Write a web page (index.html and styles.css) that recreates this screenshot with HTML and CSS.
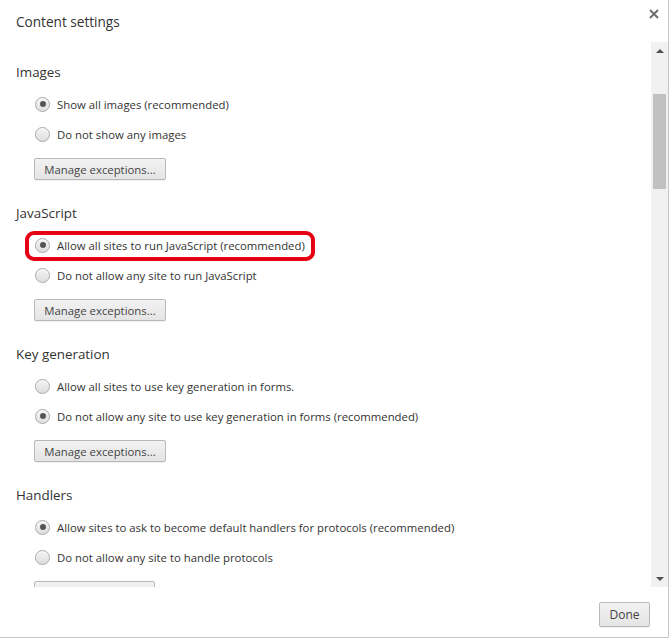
FILE: index.html
```html
<!DOCTYPE html>
<html>
<head>
<meta charset="utf-8">
<link rel="stylesheet" href="styles.css">
</head>
<body>
<div class="dialog">
  <div class="header">
    <div class="title">Content settings</div>
    <button class="close" aria-label="Close">
      <svg width="10" height="10" viewBox="0 0 10 10"><path d="M1 1L9 9M9 1L1 9" stroke="#6e6e6e" stroke-width="2"/></svg>
    </button>
  </div>
  <div class="scroll">
    <div class="content">
      <section class="group">
        <h3 class="heading">Images</h3>
        <label class="row"><span class="radio checked"></span><span>Show all images (recommended)</span></label>
        <label class="row"><span class="radio"></span><span>Do not show any images</span></label>
        <button class="btn">Manage exceptions...</button>
      </section>
      <section class="group">
        <h3 class="heading">JavaScript</h3>
        <label class="row highlight"><span class="radio checked"></span><span>Allow all sites to run JavaScript (recommended)</span></label>
        <label class="row"><span class="radio"></span><span>Do not allow any site to run JavaScript</span></label>
        <button class="btn">Manage exceptions...</button>
      </section>
      <section class="group">
        <h3 class="heading">Key generation</h3>
        <label class="row"><span class="radio"></span><span>Allow all sites to use key generation in forms.</span></label>
        <label class="row"><span class="radio checked"></span><span>Do not allow any site to use key generation in forms (recommended)</span></label>
        <button class="btn">Manage exceptions...</button>
      </section>
      <section class="group">
        <h3 class="heading">Handlers</h3>
        <label class="row"><span class="radio checked"></span><span>Allow sites to ask to become default handlers for protocols (recommended)</span></label>
        <label class="row"><span class="radio"></span><span>Do not allow any site to handle protocols</span></label>
        <button class="btn wide" aria-label="Manage handlers"></button>
      </section>
    </div>
    <div class="scrollbar">
      <div class="arrow up"></div>
      <div class="track"><div class="thumb"></div></div>
      <div class="arrow down"></div>
    </div>
  </div>
  <div class="footer">
    <button class="btn done">Done</button>
  </div>
</div>
</body>
</html>
```
FILE: styles.css
```css
html, body {
  margin: 0;
  padding: 0;
  background: #ffffff;
}
body {
  font-family: "Open Sans", "Noto Sans", sans-serif;
  color: #333333;
}
.dialog {
  width: 668px;
  height: 637px;
  background: #ffffff;
  border-right: 1px solid #c6c6c6;
  border-bottom: 1px solid #c6c6c6;
  display: flex;
  flex-direction: column;
  overflow: hidden;
}
.header {
  height: 42px;
  display: flex;
  justify-content: space-between;
  align-items: flex-start;
  flex-shrink: 0;
}
.title {
  padding: 12px 0 0 16px;
  font-size: 13.6px;
  line-height: 20px;
  color: #333;
}
.close {
  border: 0;
  background: transparent;
  padding: 0;
  margin: 9px 9px 0 0;
  width: 10px;
  height: 10px;
  display: block;
}
.close svg { display: block; }
.scroll {
  height: 545px;
  display: flex;
  flex-shrink: 0;
  overflow: hidden;
}
.content {
  flex: 1;
  padding: 20px 0 0 16px;
  overflow: hidden;
}
.group {
  display: flex;
  flex-direction: column;
  align-items: flex-start;
  padding-bottom: 23px;
}
.heading {
  margin: 0 0 7px 0;
  font-size: 13.4px;
  line-height: 20px;
  font-weight: normal;
  color: #333;
}
.row {
  height: 30px;
  display: inline-flex;
  align-items: center;
  gap: 7px;
  padding-left: 19px;
  font-size: 11.35px;
  color: #333;
  position: relative;
  white-space: nowrap;
}
.radio {
  width: 13px;
  height: 13px;
  border-radius: 50%;
  border: 1px solid #a9a9a9;
  background: linear-gradient(#f4f4f4, #dedede);
  box-sizing: content-box;
  display: flex;
  align-items: center;
  justify-content: center;
  box-shadow: inset 0 1px 1px rgba(255,255,255,0.8);
}
.radio.checked::after {
  content: "";
  width: 6px;
  height: 6px;
  border-radius: 50%;
  background: #555;
}
.highlight::after {
  content: "";
  position: absolute;
  left: 9px;
  right: -10px;
  top: 1px;
  bottom: -1px;
  border: 4px solid #e50014;
  border-radius: 9px;
}
.btn {
  font-family: "Open Sans", "Noto Sans", sans-serif;
  font-size: 11.35px;
  color: #444;
  height: 22px;
  padding: 0;
  white-space: nowrap;
  border: 1px solid #b8b8b8;
  border-radius: 2px;
  background: linear-gradient(#f2f2f2, #e4e4e4);
  box-shadow: 0 1px 0 rgba(0,0,0,0.06);
  margin: 9px 0 0 18px;
  width: 132px;
}
.btn.wide { width: 121px; }
.scrollbar {
  width: 17px;
  background: #f1f1f1;
  display: flex;
  flex-direction: column;
  align-items: center;
}
.arrow {
  height: 17px;
  width: 17px;
  display: flex;
  align-items: center;
  justify-content: center;
  flex-shrink: 0;
}
.arrow.up::after {
  content: "";
  border-left: 4px solid transparent;
  border-right: 4px solid transparent;
  border-bottom: 4px solid #505050;
}
.arrow.down::after {
  content: "";
  border-left: 4px solid transparent;
  border-right: 4px solid transparent;
  border-top: 4px solid #505050;
}
.track {
  flex: 1;
  width: 100%;
  padding-top: 35px;
  box-sizing: border-box;
}
.thumb {
  width: 13px;
  margin-left: 2px;
  height: 95px;
  background: #c1c1c1;
}
.footer {
  flex: 1;
  display: flex;
  justify-content: flex-end;
  align-items: flex-start;
  padding: 15px 18px 0 0;
}
.btn.done {
  margin: 0;
  width: 51px;
  height: 25px;
  padding: 0;
  font-size: 12px;
}
```
